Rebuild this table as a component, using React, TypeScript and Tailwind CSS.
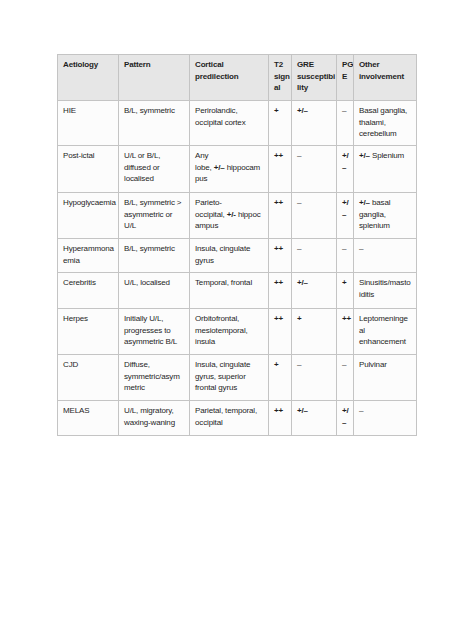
import type { ReactNode } from 'react';

type Row = { h: string; cells: ReactNode[] };

const B = ({ children }: { children: ReactNode }) => <span className="font-bold">{children}</span>;

const header = [
  'Aetiology',
  'Pattern',
  <>Cortical<br />predilection</>,
  <>T2<br />sign<br />al</>,
  <>GRE<br />susceptibi<br />lity</>,
  <>PG<br />E</>,
  <>Other<br />involvement</>,
];

const rows: Row[] = [
  {
    h: 'h-[45px]',
    cells: [
      'HIE',
      'B/L, symmetric',
      <>Perirolandic,<br />occipital cortex</>,
      <B>+</B>,
      <B>+/–</B>,
      '–',
      <>Basal ganglia,<br />thalami,<br />cerebellum</>,
    ],
  },
  {
    h: 'h-[47px]',
    cells: [
      'Post-ictal',
      <>U/L or B/L,<br />diffused or<br />localised</>,
      <>Any<br />lobe, <B>+/–</B> hippocam<br />pus</>,
      <B>++</B>,
      '–',
      <B><>+/<br />–</></B>,
      <><B>+/–</B> Splenium</>,
    ],
  },
  {
    h: 'h-[46px]',
    cells: [
      'Hypoglycaemia',
      <>B/L, symmetric &gt;<br />asymmetric or<br />U/L</>,
      <>Parieto-<br />occipital, <B>+/-</B> hippoc<br />ampus</>,
      <B>++</B>,
      '–',
      <B><>+/<br />–</></B>,
      <><B>+/–</B> basal<br />ganglia,<br />splenium</>,
    ],
  },
  {
    h: 'h-[34px]',
    cells: [
      <>Hyperammona<br />emia</>,
      'B/L, symmetric',
      <>Insula, cingulate<br />gyrus</>,
      <B>++</B>,
      '–',
      '–',
      '–',
    ],
  },
  {
    h: 'h-[36px]',
    cells: [
      'Cerebritis',
      'U/L, localised',
      'Temporal, frontal',
      <B>++</B>,
      <B>+/–</B>,
      <B>+</B>,
      <>Sinusitis/masto<br />iditis</>,
    ],
  },
  {
    h: 'h-[46px]',
    cells: [
      'Herpes',
      <>Initially U/L,<br />progresses to<br />asymmetric B/L</>,
      <>Orbitofrontal,<br />mesiotemporal,<br />insula</>,
      <B>++</B>,
      <B>+</B>,
      <B>++</B>,
      <>Leptomeninge<br />al<br />enhancement</>,
    ],
  },
  {
    h: 'h-[46px]',
    cells: [
      'CJD',
      <>Diffuse,<br />symmetric/asym<br />metric</>,
      <>Insula, cingulate<br />gyrus, superior<br />frontal gyrus</>,
      <B>+</B>,
      '–',
      '–',
      'Pulvinar',
    ],
  },
  {
    h: 'h-[35px]',
    cells: [
      'MELAS',
      <>U/L, migratory,<br />waxing-waning</>,
      <>Parietal, temporal,<br />occipital</>,
      <B>++</B>,
      <B>+/–</B>,
      <B><>+/<br />–</></B>,
      '–',
    ],
  },
];

const widths = ['w-[61px]', 'w-[71px]', 'w-[79px]', 'w-[23px]', 'w-[45px]', 'w-[17px]', 'w-[63px]'];

const cell = 'border border-[#c4c4c4] align-top pl-[5px] pr-0 pt-[4px] whitespace-nowrap overflow-hidden';

export default function App() {
  return (
    <div
      className="w-[474px] h-[632px] bg-white pt-[54px] pl-[57px] text-[8px] tracking-[-0.15px] leading-[11.7px] text-[#1f1f1f]"
      style={{ fontFamily: '"Liberation Sans", Arial, sans-serif' }}
    >
      <table className="border-collapse table-fixed w-[359px]">
        <colgroup>
          {widths.map((w, i) => (
            <col key={i} className={w} />
          ))}
        </colgroup>
        <thead>
          <tr className="h-[46px] bg-[#e6e6e6]">
            {header.map((c, i) => (
              <th key={i} className={`${cell} text-left font-bold`}>
                {c}
              </th>
            ))}
          </tr>
        </thead>
        <tbody>
          {rows.map((r, i) => (
            <tr key={i} className={`${r.h} bg-[#fcfcfc]`}>
              {r.cells.map((c, j) => (
                <td key={j} className={cell}>
                  {c}
                </td>
              ))}
            </tr>
          ))}
        </tbody>
      </table>
    </div>
  );
}
